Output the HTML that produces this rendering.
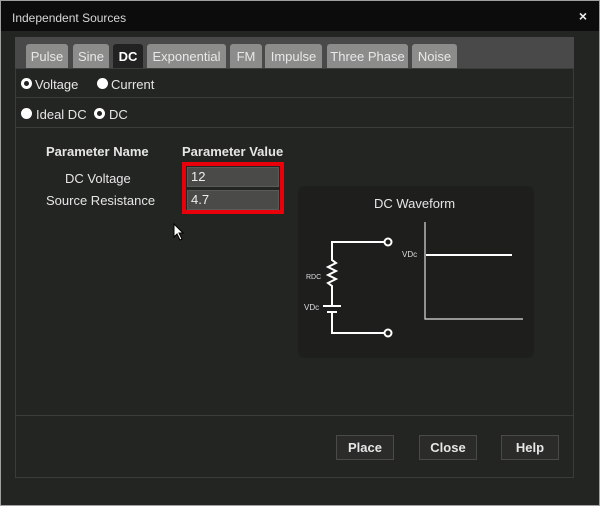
<!DOCTYPE html>
<html><head><style>
*{margin:0;padding:0;box-sizing:border-box}
body{width:600px;height:506px;background:#a0a0a0;font-family:"Liberation Sans",sans-serif;overflow:hidden;position:relative}
.win{position:absolute;left:1px;top:1px;width:598px;height:504px;background:#232522}
.title{position:absolute;left:0;top:0;width:598px;height:30px;background:#0b0c0b;color:#d8d8d8;font-size:12px;line-height:34px;padding-left:11px}
.x{position:absolute;right:12px;top:-2px;color:#eee;font-size:14px;font-weight:bold}
.a{position:absolute}
.tabbar{left:15px;top:37px;width:559px;height:31px;background:#484948}
.tab{position:absolute;top:44px;height:24px;background:#8c8d8b;color:#e8e8e8;font-size:13px;line-height:25px;text-align:center;border-radius:3px 3px 0 0}
.panel{left:15px;top:68px;width:559px;height:410px;border:1px solid #3b3c3a;background:#232522}
.hl{position:absolute;left:16px;width:557px;height:1px;background:#3b3c3a}
.t{position:absolute;color:#e6e6e6;font-size:13px}
.rad{position:absolute;width:11px;height:11px;border-radius:50%;background:#fff}
.rad.on::after{content:"";position:absolute;left:3px;top:3px;width:5px;height:5px;border-radius:50%;background:#222}
.inp{position:absolute;left:187px;width:92px;height:20px;background:#4a4b49;border:1px solid #5a5b59;color:#eee;font-size:13px;line-height:18px;padding-left:3px}
.btn{position:absolute;top:435px;width:58px;height:25px;background:#2b2c2a;border:1px solid #4a4b49;color:#e6e6e6;font-size:13px;font-weight:bold;text-align:center;line-height:23px}
</style></head><body>
<div class="win">
<div class="title">Independent Sources<span class="x">×</span></div>
</div>
<div class="a tabbar"></div>
<div class="tab" style="left:26px;width:42px">Pulse</div>
<div class="tab" style="left:73px;width:36px">Sine</div>
<div class="tab" style="left:113px;width:30px;background:#222;color:#fff;font-weight:bold">DC</div>
<div class="tab" style="left:147px;width:79px">Exponential</div>
<div class="tab" style="left:230px;width:32px">FM</div>
<div class="tab" style="left:265px;width:57px">Impulse</div>
<div class="tab" style="left:327px;width:81px">Three Phase</div>
<div class="tab" style="left:412px;width:45px">Noise</div>
<div class="a panel"></div>
<div class="hl" style="top:97px"></div>
<div class="hl" style="top:127px"></div>
<div class="hl" style="top:415px"></div>
<div class="rad on" style="left:21px;top:78px"></div><div class="t" style="left:35px;top:77px">Voltage</div>
<div class="rad" style="left:97px;top:78px"></div><div class="t" style="left:111px;top:77px">Current</div>
<div class="rad" style="left:21px;top:108px"></div><div class="t" style="left:36px;top:107px">Ideal DC</div>
<div class="rad on" style="left:94px;top:108px"></div><div class="t" style="left:109px;top:107px">DC</div>
<div class="t" style="left:46px;top:144px;font-weight:bold">Parameter Name</div>
<div class="t" style="left:182px;top:144px;font-weight:bold">Parameter Value</div>
<div class="t" style="left:65px;top:171px">DC Voltage</div>
<div class="t" style="left:46px;top:193px">Source Resistance</div>
<div class="a" style="left:182px;top:162px;width:102px;height:52px;border:4px solid #e8000a"></div>
<div class="inp" style="top:167px">12</div>
<div class="inp" style="top:190px">4.7</div>
<svg class="a" style="left:172px;top:222px" width="14" height="20"><path d="M2 2 L2 15 L5 12 L8 18 L10 17 L7 11 L11 11 Z" fill="#fff" stroke="#000" stroke-width="1"/></svg>
<svg class="a" style="left:298px;top:186px" width="236" height="172" font-family="Liberation Sans,sans-serif">
<rect width="236" height="172" rx="6" fill="#1e1f1d"/>
<text x="76" y="22" fill="#e6e6e6" font-size="13">DC Waveform</text>
<g stroke="#fff" stroke-width="2" fill="none">
<path d="M86 56 H34 V74 l4 3 -8 4 8 4 -8 4 8 4 -8 4 4 3 V120"/>
<path d="M25 120 H43 M29 126 H39"/>
<path d="M34 126 V147 H86"/>
<circle cx="90" cy="56" r="3.5"/><circle cx="90" cy="147" r="3.5"/>
<path d="M128 69 H214"/>
</g>
<path d="M127 36 V133 H225" stroke="#ddd" stroke-width="1.2" fill="none"/>
<text x="8" y="93" fill="#ddd" font-size="7">RDC</text>
<text x="6" y="124" fill="#ddd" font-size="8">VDc</text>
<text x="104" y="71" fill="#ddd" font-size="8">VDc</text>
</svg>
<div class="btn" style="left:336px">Place</div>
<div class="btn" style="left:419px">Close</div>
<div class="btn" style="left:501px">Help</div>
</body></html>
